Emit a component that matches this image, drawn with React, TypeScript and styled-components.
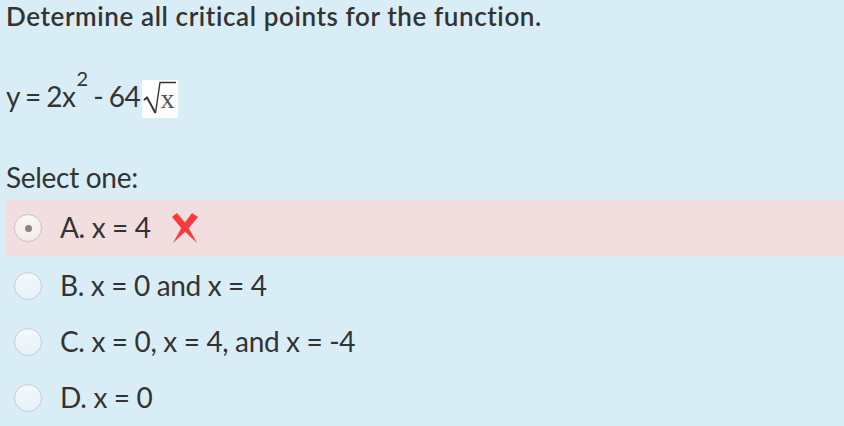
import React from "react";
import styled, { createGlobalStyle } from "styled-components";

const GlobalStyle = createGlobalStyle`
  html, body {
    margin: 0;
    padding: 0;
    background: #d9edf7;
  }
  body {
    font-family: Lato, "Open Sans", "Noto Sans", sans-serif;
    color: #333333;
  }
`;

const Page = styled.div`
  width: 844px;
  height: 426px;
  overflow: hidden;
  background: #d9edf7;
  padding-left: 6px;
  box-sizing: border-box;
`;

const Title = styled.div`
  font-size: 26px;
  font-weight: 600;
  letter-spacing: 0.6px;
  line-height: 32px;
  color: #333333;
  white-space: nowrap;
`;

const Formula = styled.div`
  margin-top: 44px;
  height: 40px;
  font-size: 28px;
  line-height: 40px;
  letter-spacing: -0.5px;
  word-spacing: -1px;
  white-space: nowrap;
`;

const Sup = styled.span`
  font-size: 20px;
  line-height: 0;
  vertical-align: 21px;
  margin-left: 1px;
`;

const SqrtImage = styled.span`
  display: inline-block;
  width: 36px;
  height: 38px;
  background: #ffffff;
  margin-left: 2px;
  vertical-align: -11px;
  line-height: 0;
`;

const Prompt = styled.div`
  margin-top: 41px;
  font-size: 28px;
  line-height: 40px;
  letter-spacing: -0.3px;
`;

const Options = styled.div`
  margin-top: 3px;
  display: flex;
  flex-direction: column;
`;

const OptionRow = styled.div<{ $incorrect?: boolean }>`
  height: 56px;
  display: flex;
  align-items: center;
  gap: 18px;
  padding-left: 8px;
  background: ${(p) => (p.$incorrect ? "#f2dede" : "transparent")};
  margin-bottom: ${(p) => (p.$incorrect ? "2px" : "0")};
`;

const Radio = styled.span<{ $checked?: boolean; $onPink?: boolean }>`
  width: 28px;
  height: 28px;
  box-sizing: border-box;
  border-radius: 50%;
  border: 1px solid ${(p) => (p.$onPink ? "#cfc3c3" : "#c3ccd3")};
  background: ${(p) =>
    p.$onPink
      ? "linear-gradient(#fbf6f6, #f5eaea)"
      : "linear-gradient(#f3f8fc, #e7f1f9)"};
  display: flex;
  align-items: center;
  justify-content: center;
  flex: none;
  &::after {
    content: "";
    display: ${(p) => (p.$checked ? "block" : "none")};
    width: 7px;
    height: 7px;
    border-radius: 50%;
    background: #8a8585;
  }
`;

const Label = styled.span`
  font-size: 28px;
  line-height: 40px;
  letter-spacing: -0.35px;
  padding-bottom: 3px;
  white-space: nowrap;
`;

const CrossIcon = styled.svg`
  width: 26px;
  height: 30px;
  margin-left: 3px;
  flex: none;
`;

function Cross() {
  return (
    <CrossIcon viewBox="0 0 26 30">
      <polygon points="0,4 5,0 15,12 25,30 10,16" fill="#fb3b3b" />
      <polygon points="20,0 26,4 16,16 1,30 11,12" fill="#fb3b3b" />
    </CrossIcon>
  );
}

function SqrtX() {
  return (
    <SqrtImage>
      <svg width="36" height="38" viewBox="0 0 36 38">
        <polyline
          points="2,20 5,17.5 13.5,33"
          fill="none"
          stroke="#333"
          strokeWidth="2"
          strokeLinejoin="miter"
        />
        <polyline
          points="13.5,33 18,2.5 34,2.5"
          fill="none"
          stroke="#333"
          strokeWidth="1.4"
        />
        <text
          x="18.5"
          y="28"
          fontFamily="'Liberation Serif', serif"
          fontSize="28"
          fill="#555"
        >
          x
        </text>
      </svg>
    </SqrtImage>
  );
}

const options = [
  { label: "A. x = 4", checked: true, incorrect: true },
  { label: "B. x = 0 and x = 4" },
  { label: "C. x = 0, x = 4, and x = -4" },
  { label: "D. x = 0" },
];

export default function App() {
  return (
    <>
      <GlobalStyle />
      <Page>
        <Title>Determine all critical points for the function.</Title>
        <Formula>
          y = 2x<Sup>2</Sup> - 64
          <SqrtX />
        </Formula>
        <Prompt>Select one:</Prompt>
        <Options>
          {options.map((o) => (
            <OptionRow key={o.label} $incorrect={o.incorrect}>
              <Radio $checked={o.checked} $onPink={o.incorrect} />
              <Label>{o.label}</Label>
              {o.incorrect && <Cross />}
            </OptionRow>
          ))}
        </Options>
      </Page>
    </>
  );
}
